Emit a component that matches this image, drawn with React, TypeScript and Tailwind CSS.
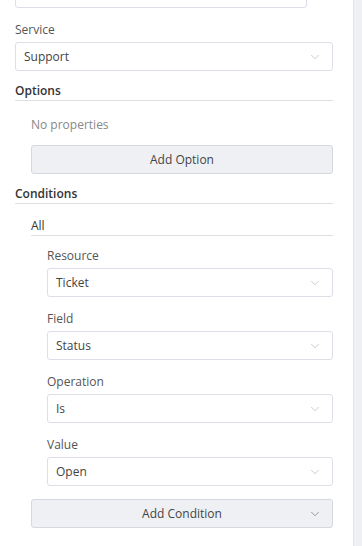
import { ChevronDown } from 'lucide-react';

const Select = ({ value }: { value: string }) => (
  <div className="mt-[3px] flex h-[29px] items-center justify-between rounded-[3px] border border-[#dcdfe6] bg-white pl-[8px] pr-[10px] text-[12px] text-[#444]">
    <span>{value}</span>
    <ChevronDown className="h-[14px] w-[14px] text-[#a3a8b0]" strokeWidth={1} />
  </div>
);

const Field = ({ label, value, className = '' }: { label: string; value: string; className?: string }) => (
  <div className={className}>
    <div className="text-[12px] leading-[18px] text-[#555]">{label}</div>
    <Select value={value} />
  </div>
);

const Heading = ({ children, className = '' }: { children: string; className?: string }) => (
  <div className={`border-b border-[#dcdfe3] text-[12px] leading-[18px] text-[#333] ${className}`}>
    {children}
  </div>
);

const App = () => {
  return (
    <div className="flex h-[546px] w-[362px] overflow-hidden bg-white font-['Open_Sans',sans-serif]">
      {/* Formulário */}
      <div className="w-[353px] shrink-0 pl-[15px] pr-[20px]">
        <div className="-mt-[21px] mr-[26px] h-[29px] rounded-[3px] border border-[#dcdfe6] bg-white" />

        <Field label="Service" value="Support" className="mt-[13px]" />

        <Heading className="mt-[11px] font-semibold">Options</Heading>
        <div className="pl-[16px]">
          <div className="mt-[15px] text-[12px] leading-[18px] text-[#888]">No properties</div>
          <button
            type="button"
            className="mt-[11px] flex h-[29px] w-full items-center justify-center rounded-[3px] border border-[#d5d8de] bg-[#eef0f4] text-[12px] text-[#444]"
          >
            Add Option
          </button>
        </div>

        <Heading className="mt-[11px] font-semibold">Conditions</Heading>
        <div className="pl-[16px]">
          <Heading className="mt-[13px] font-medium">All</Heading>
          <div className="pl-[16px]">
            <Field label="Resource" value="Ticket" className="mt-[11px]" />
            <Field label="Field" value="Status" className="mt-[13px]" />
            <Field label="Operation" value="Is" className="mt-[13px]" />
            <Field label="Value" value="Open" className="mt-[13px]" />
          </div>
          <button
            type="button"
            className="relative mt-[13px] flex h-[29px] w-full items-center justify-center rounded-[3px] border border-[#d5d8de] bg-[#eef0f4] text-[12px] text-[#444]"
          >
            Add Condition
            <ChevronDown className="absolute right-[10px] h-[14px] w-[14px] text-[#777]" strokeWidth={1.2} />
          </button>
        </div>
      </div>

      {/* Barra lateral */}
      <div className="flex-1 border-l border-[#e2e5ea] bg-[#eef0f4]" />
    </div>
  );
};

export default App;
